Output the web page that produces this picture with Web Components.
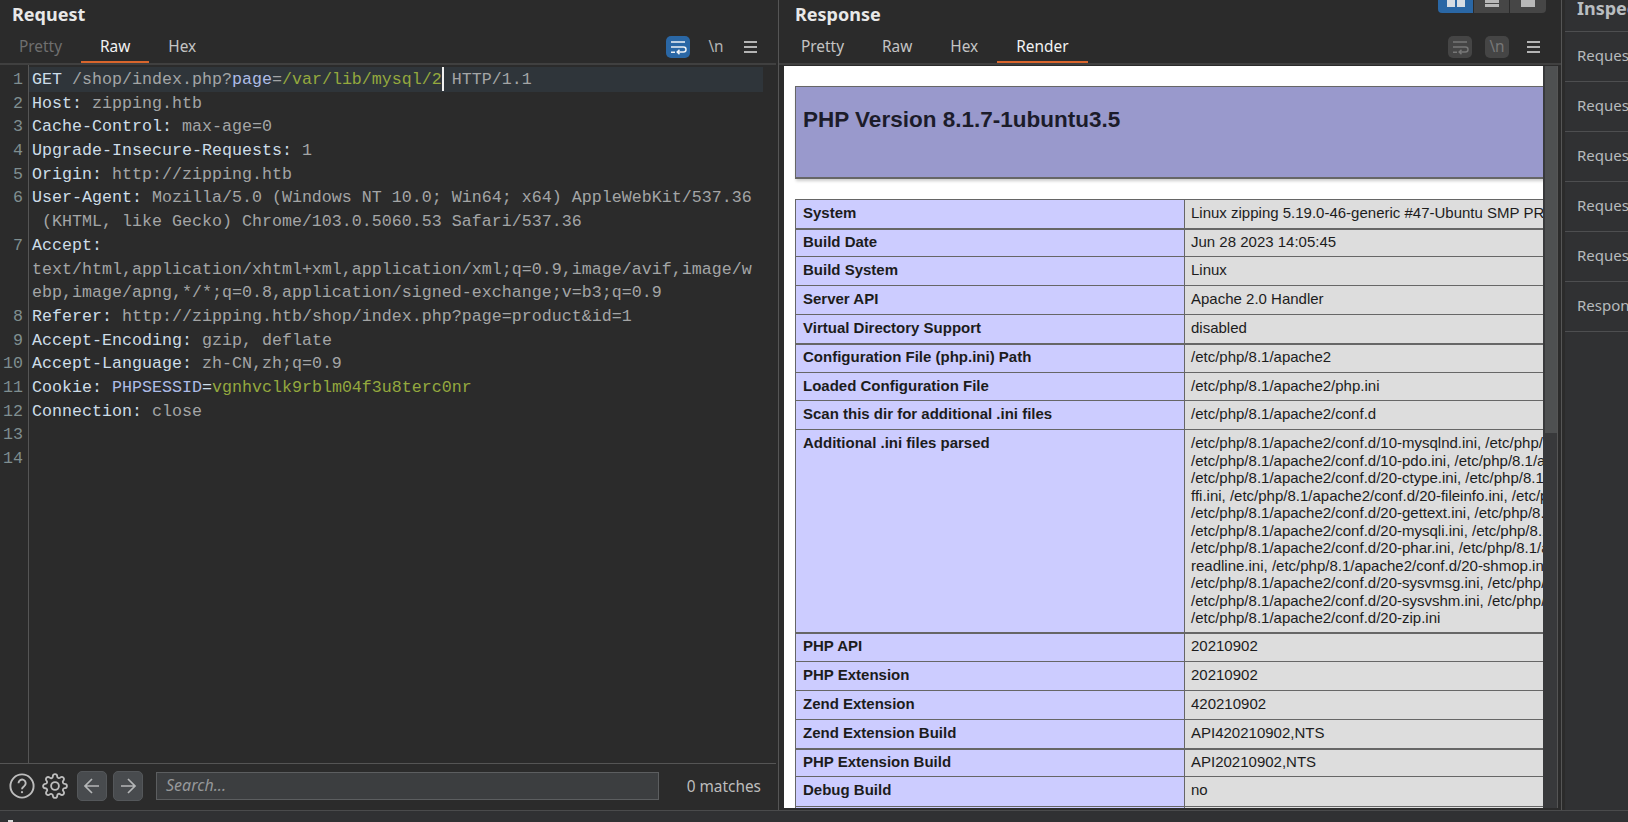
<!DOCTYPE html>
<html>
<head>
<meta charset="utf-8">
<title>Repeater</title>
<style>
  html, body { margin: 0; padding: 0; background: #2b2b2b; overflow: hidden; }
  body { font-family: "Noto Sans", "Open Sans", sans-serif; }
</style>
</head>
<body>
<burp-app>
  <message-pane heading="Request" style="--head-left:12px;--tools-right:19px;--strip-left:0px">
    <tab-strip tabs="Pretty,Raw,Hex" active="Raw" dim="Pretty"></tab-strip>
    <code-view></code-view>
    <search-bar></search-bar>
  </message-pane>
  <message-pane slot="response" heading="Response" style="--head-left:16px;--tools-right:21px;--strip-left:3px">
    <layout-toggle slot="head"></layout-toggle>
    <tab-strip tabs="Pretty,Raw,Hex,Render" active="Render" disabled></tab-strip>
    <render-view>
      <php-info></php-info>
    </render-view>
  </message-pane>
  <inspector-rail slot="rail"></inspector-rail>
</burp-app>

<script>
const WRAP_ICON = `<svg width="24" height="22" viewBox="0 0 24 22" fill="none" stroke="currentColor" stroke-width="1.5">
  <path d="M5 6h14M5 11h12.5a2.5 2.5 0 0 1 0 5H11.5M13.5 13.8l-2.3 2.2 2.3 2.2M5 16.2h4"/></svg>`;
const MENU_ICON = `<svg width="13" height="12" viewBox="0 0 13 12" fill="currentColor">
  <rect y="0" width="13" height="2"/><rect y="5" width="13" height="2"/><rect y="10" width="13" height="2"/></svg>`;
const GEAR_PATH = 'M19.4 15a1.65 1.65 0 0 0 .33 1.82l.06.06a2 2 0 0 1 0 2.83 2 2 0 0 1-2.83 0l-.06-.06a1.65 1.65 0 0 0-1.82-.33 1.65 1.65 0 0 0-1 1.51V21a2 2 0 0 1-2 2 2 2 0 0 1-2-2v-.09A1.65 1.65 0 0 0 9 19.4a1.65 1.65 0 0 0-1.82.33l-.06.06a2 2 0 0 1-2.83 0 2 2 0 0 1 0-2.83l.06-.06a1.65 1.65 0 0 0 .33-1.82 1.65 1.65 0 0 0-1.51-1H3a2 2 0 0 1-2-2 2 2 0 0 1 2-2h.09A1.65 1.65 0 0 0 4.6 9a1.65 1.65 0 0 0-.33-1.82l-.06-.06a2 2 0 0 1 0-2.83 2 2 0 0 1 2.83 0l.06.06a1.65 1.65 0 0 0 1.82.33H9a1.65 1.65 0 0 0 1-1.51V3a2 2 0 0 1 2-2 2 2 0 0 1 2 2v.09a1.65 1.65 0 0 0 1 1.51 1.65 1.65 0 0 0 1.82-.33l.06-.06a2 2 0 0 1 2.83 0 2 2 0 0 1 0 2.83l-.06.06a1.65 1.65 0 0 0-.33 1.82V9a1.65 1.65 0 0 0 1.51 1H21a2 2 0 0 1 2 2 2 2 0 0 1-2 2h-.09a1.65 1.65 0 0 0-1.51 1z';

class BurpApp extends HTMLElement {
  constructor() {
    super();
    this.attachShadow({mode: 'open'});
    this.shadowRoot.innerHTML = `
      <style>
        :host {
          display: grid;
          grid-template-columns: 776px 2px 1px 782px 1px 1fr;
          grid-template-rows: 810px 12px;
          width: 1628px;
          height: 822px;
          background: #2b2b2b;
        }
        .line { background: #555; }
        .status {
          grid-column: 1 / -1;
          border-top: 1px solid #4a4b4c;
          background: #303133;
          padding-left: 8px;
          display: flex;
          align-items: flex-end;
        }
        .status i { display: block; width: 5px; height: 2px; background: #d8d8d8; }
      </style>
      <slot></slot>
      <div></div>
      <div class="line"></div>
      <slot name="response"></slot>
      <div class="line"></div>
      <slot name="rail"></slot>
      <div class="status"><i></i></div>
    `;
  }
}

class MessagePane extends HTMLElement {
  constructor() {
    super();
    this.attachShadow({mode: 'open'});
  }

  connectedCallback() {
    this.shadowRoot.innerHTML = `
      <style>
        :host {
          display: flex;
          flex-direction: column;
          min-width: 0;
          height: 810px;
          overflow: hidden;
        }
        .head {
          height: 30px;
          flex: none;
          display: flex;
          justify-content: space-between;
          align-items: flex-start;
          padding: 0 15px 0 var(--head-left);
        }
        h2 {
          margin: 0;
          font: 700 18px/29px "Noto Sans", sans-serif;
          color: #e8e8e8;
        }
      </style>
      <div class="head"><h2>${this.getAttribute('heading')}</h2><slot name="head"></slot></div>
      <slot></slot>
    `;
  }
}

class LayoutToggle extends HTMLElement {
  constructor() {
    super();
    this.attachShadow({mode: 'open'});
    this.shadowRoot.innerHTML = `
      <style>
        :host { display: flex; gap: 1px; height: 13px; }
        span {
          width: 35px;
          display: flex;
          gap: 2px;
          justify-content: center;
          background: #464646;
        }
        span:first-of-type { background: #2a67a5; border-bottom-left-radius: 4px; }
        span:last-of-type { width: 36px; border-bottom-right-radius: 4px; }
        b { display: block; height: 7px; background: #b8b8b8; }
        span:first-of-type b { width: 8px; background: #d7dde3; }
        .stack { flex-direction: column; align-items: center; justify-content: flex-start; gap: 1px; }
        .stack b { width: 14px; height: 3px; }
        span:last-of-type b { width: 14px; }
      </style>
      <span><b></b><b></b></span>
      <span class="stack"><b></b><b></b></span>
      <span><b></b></span>
    `;
  }
}

class TabStrip extends HTMLElement {
  constructor() {
    super();
    this.attachShadow({mode: 'open'});
  }

  connectedCallback() {
    const active = this.getAttribute('active');
    const dim = this.getAttribute('dim');
    const off = this.hasAttribute('disabled');
    this.shadowRoot.innerHTML = `
      <style>
        :host {
          display: flex;
          flex: none;
          height: 35px;
          box-sizing: border-box;
          border-bottom: 2px solid #404040;
          padding: 0 var(--tools-right) 0 var(--strip-left);
          font: 15.4px/33px "Noto Sans", sans-serif;
          color: #c4c4c4;
          align-items: stretch;
        }
        .tab { padding: 0 19px; height: 31px; border-bottom: 2px solid transparent; }
        .tab.on { color: #f2f2f2; border-bottom-color: #d9652c; }
        .tab.dim { color: #6f6f6f; }
        .tools { margin-left: auto; display: flex; align-items: center; color: #b4b4b4; }
        .btn {
          width: 24px;
          height: 22px;
          border-radius: 5px;
          display: flex;
          align-items: center;
          justify-content: center;
          line-height: 22px;
        }
        .wrap { background: #2a67a5; color: #eef2f6; margin-right: 14px; }
        .nl { margin-right: 16px; }
        .off .wrap { background: #454545; color: #777; margin-right: 13px; }
        .off .nl { background: #454545; color: #777; margin-right: 18px; }
      </style>
      ${
        this.getAttribute('tabs')
            .split(',')
            .map(t => `<div class="tab ${t === active ? 'on' : ''} ${t === dim ? 'dim' : ''}">${t}</div>`)
            .join('')}
      <div class="tools ${off ? 'off' : ''}">
        <div class="btn wrap">${WRAP_ICON}</div>
        <div class="btn nl">\\n</div>
        ${MENU_ICON}
      </div>
    `;
  }
}

// one entry per drawn row: [line number or '', parts]
// k key, v plain value, n param name, g green value, c caret
const REQUEST = [
  [1, [['k', 'GET'], ['v', ' /shop/index.php?'], ['n', 'page'], ['v', '='], ['g', '/var/lib/mysql/2'], ['c', ''], ['v', ' HTTP/1.1']]],
  [2, [['k', 'Host:'], ['v', ' zipping.htb']]],
  [3, [['k', 'Cache-Control:'], ['v', ' max-age=0']]],
  [4, [['k', 'Upgrade-Insecure-Requests:'], ['v', ' 1']]],
  [5, [['k', 'Origin:'], ['v', ' http://zipping.htb']]],
  [6, [['k', 'User-Agent:'], ['v', ' Mozilla/5.0 (Windows NT 10.0; Win64; x64) AppleWebKit/537.36']]],
  ['', [['v', ' (KHTML, like Gecko) Chrome/103.0.5060.53 Safari/537.36']]],
  [7, [['k', 'Accept:']]],
  ['', [['v', 'text/html,application/xhtml+xml,application/xml;q=0.9,image/avif,image/w']]],
  ['', [['v', 'ebp,image/apng,*/*;q=0.8,application/signed-exchange;v=b3;q=0.9']]],
  [8, [['k', 'Referer:'], ['v', ' http://zipping.htb/shop/index.php?page=product&amp;id=1']]],
  [9, [['k', 'Accept-Encoding:'], ['v', ' gzip, deflate']]],
  [10, [['k', 'Accept-Language:'], ['v', ' zh-CN,zh;q=0.9']]],
  [11, [['k', 'Cookie:'], ['v', ' '], ['n', 'PHPSESSID'], ['k', '='], ['g', 'vgnhvclk9rblm04f3u8terc0nr']]],
  [12, [['k', 'Connection:'], ['v', ' close']]],
  [13, []],
  [14, []],
];

class CodeView extends HTMLElement {
  constructor() {
    super();
    this.attachShadow({mode: 'open'});
  }

  connectedCallback() {
    this.shadowRoot.innerHTML = `
      <style>
        :host {
          display: grid;
          grid-template-columns: 29px 1fr;
          flex: 1;
          min-height: 0;
          font: 16.67px/23.7px "Liberation Mono", monospace;
          border-bottom: 1px solid #555;
        }
        .gutter { border-right: 1px solid #555; padding-top: 3px; color: #7f8e90; text-align: right; }
        .gutter div { padding-right: 5px; height: 23.7px; }
        .text { padding: 3px 13px 0 0; }
        .l { white-space: pre; padding-left: 3px; height: 23.7px; }
        .l.cur { background: #2f353a; margin-top: -1px; padding-top: 1px; }
        .k { color: #cddde8; }
        .v { color: #a3a5a6; }
        .n { color: #aebce6; }
        .g { color: #94a83e; }
        .c { display: inline-block; width: 2px; height: 24px; margin: -1px -2px 0 0; background: #f0f0f0; vertical-align: top; }
      </style>
      <div class="gutter">
        ${REQUEST.map(([num]) => `<div>${num}</div>`).join('')}
      </div>
      <div class="text">
        ${
        REQUEST
            .map(
                ([num, parts], i) => `<div class="l ${i === 0 ? 'cur' : ''}">${
                    parts.map(([cls, txt]) => `<span class="${cls}">${txt}</span>`).join('')}</div>`)
            .join('')}
      </div>
    `;
  }
}

class SearchBar extends HTMLElement {
  constructor() {
    super();
    this.attachShadow({mode: 'open'});
    this.shadowRoot.innerHTML = `
      <style>
        :host {
          display: flex;
          flex: none;
          align-items: center;
          height: 46px;
          box-sizing: border-box;
          padding: 0 15px 2px 9px;
          color: #bdbdbd;
          font: 15.4px "Noto Sans", sans-serif;
        }
        svg { display: block; flex: none; }
        .gear { margin: 0 9px 0 7px; }
        .arrow {
          width: 30px;
          height: 30px;
          box-sizing: border-box;
          border: 1px solid #54575a;
          border-radius: 5px;
          background: #484b4e;
          display: flex;
          align-items: center;
          justify-content: center;
          margin-right: 6px;
          color: #b5b7b8;
        }
        .input {
          flex: 1;
          height: 28px;
          box-sizing: border-box;
          border: 1px solid #5c5e60;
          background: #3c3e40;
          margin: 0 28px 0 7px;
          padding-left: 9px;
          font: italic 16px/25px "Noto Sans", sans-serif;
          color: #96989a;
        }
      </style>
      <svg width="26" height="26" viewBox="0 0 26 26" fill="none" stroke="currentColor" stroke-width="1.9">
        <circle cx="13" cy="13" r="11.6"/>
        <path d="M9.5 10.2a3.6 3.6 0 1 1 5.6 3c-1.3.9-2.1 1.5-2.1 3"/>
        <circle cx="13" cy="19.2" r="1.1" fill="currentColor" stroke="none"/>
      </svg>
      <svg class="gear" width="26" height="26" viewBox="0 0 24 24" fill="none" stroke="currentColor" stroke-width="1.7">
        <path d="${GEAR_PATH}"/><circle cx="12" cy="12" r="3.6"/>
      </svg>
      <div class="arrow"><svg width="18" height="18" viewBox="0 0 18 18" fill="none" stroke="currentColor" stroke-width="1.7"><path d="M16 9H2M9 2L2 9l7 7"/></svg></div>
      <div class="arrow"><svg width="18" height="18" viewBox="0 0 18 18" fill="none" stroke="currentColor" stroke-width="1.7"><path d="M2 9h14M9 2l7 7-7 7"/></svg></div>
      <div class="input">Search...</div>
      <div>0 matches</div>
    `;
  }
}

class RenderView extends HTMLElement {
  constructor() {
    super();
    this.attachShadow({mode: 'open'});
    this.shadowRoot.innerHTML = `
      <style>
        :host {
          display: flex;
          flex: 1;
          min-height: 0;
          padding: 1px 3px 2px 5px;
        }
        .page { flex: 1; min-width: 0; overflow: hidden; background: #fff; }
        .track {
          flex: none;
          width: 14px;
          padding-left: 2px;
          box-sizing: border-box;
          background: #38393b;
        }
        .thumb { height: 367px; background: #4e5051; }
        .edge { width: 1px; background: #555; }
      </style>
      <div class="page"><slot></slot></div>
      <div class="track"><div class="thumb"></div></div>
      <div class="edge"></div>
    `;
  }
}

class PhpRow extends HTMLElement {
  constructor() {
    super();
    this.attachShadow({mode: 'open'});
  }

  connectedCallback() {
    const thick = this.hasAttribute('thick');
    this.shadowRoot.innerHTML = `
      <style>
        :host {
          display: grid;
          grid-template-columns: 389px 1fr;
          height: ${this.getAttribute('h')}px;
          box-sizing: border-box;
          border-top: ${thick ? 2 : 1}px solid #666;
          color: #1c1c1c;
          line-height: 17.55px;
        }
        div { box-sizing: border-box; white-space: pre; overflow: hidden; }
        .e {
          padding: ${thick ? 3 : 4}px 0 0 7px;
          background: #ccf;
          border-right: 1px solid #666;
          font-weight: 700;
          font-size: 15px;
        }
        .v { padding: ${thick ? 3 : 4}px 0 0 6px; background: #ddd; font-size: 15px; }
      </style>
      <div class="e">${this.getAttribute('label')}</div>
      <div class="v"><slot></slot></div>
    `;
  }
}
customElements.define('php-row', PhpRow);

const PHP_ROWS = [
  [29, 'System', 'Linux zipping 5.19.0-46-generic #47-Ubuntu SMP PREEMPT'],
  [28, 'Build Date', 'Jun 28 2023 14:05:45', 1],
  [29, 'Build System', 'Linux'],
  [29, 'Server API', 'Apache 2.0 Handler'],
  [29, 'Virtual Directory Support', 'disabled'],
  [29, 'Configuration File (php.ini) Path', '/etc/php/8.1/apache2', 1],
  [28, 'Loaded Configuration File', '/etc/php/8.1/apache2/php.ini'],
  [29, 'Scan this dir for additional .ini files', '/etc/php/8.1/apache2/conf.d'],
  [203, 'Additional .ini files parsed', `/etc/php/8.1/apache2/conf.d/10-mysqlnd.ini, /etc/php/8.1
/etc/php/8.1/apache2/conf.d/10-pdo.ini, /etc/php/8.1/apache2
/etc/php/8.1/apache2/conf.d/20-ctype.ini, /etc/php/8.1/apache2
ffi.ini, /etc/php/8.1/apache2/conf.d/20-fileinfo.ini, /etc/php/8.1
/etc/php/8.1/apache2/conf.d/20-gettext.ini, /etc/php/8.1/apache2
/etc/php/8.1/apache2/conf.d/20-mysqli.ini, /etc/php/8.1/apache2
/etc/php/8.1/apache2/conf.d/20-phar.ini, /etc/php/8.1/apache2
readline.ini, /etc/php/8.1/apache2/conf.d/20-shmop.ini
/etc/php/8.1/apache2/conf.d/20-sysvmsg.ini, /etc/php/8.1/apache2
/etc/php/8.1/apache2/conf.d/20-sysvshm.ini, /etc/php/8.1/apache2
/etc/php/8.1/apache2/conf.d/20-zip.ini`],
  [29, 'PHP API', '20210902', 1],
  [29, 'PHP Extension', '20210902'],
  [29, 'Zend Extension', '420210902'],
  [29, 'Zend Extension Build', 'API420210902,NTS'],
  [28, 'PHP Extension Build', 'API20210902,NTS', 1],
  [30, 'Debug Build', 'no'],
  [29, '', ''],
];

class PhpInfo extends HTMLElement {
  constructor() {
    super();
    this.attachShadow({mode: 'open'});
  }

  connectedCallback() {
    this.shadowRoot.innerHTML = `
      <style>
        :host {
          display: block;
          width: 1000px;
          padding: 20px 0 0 11px;
          font-family: "Liberation Sans", Arial, sans-serif;
        }
        .banner {
          height: 93px;
          box-sizing: border-box;
          background: #99c;
          border: 1px solid #666;
          border-bottom-width: 2px;
          box-shadow: 1px 2px 3px #ccc;
          padding: 20px 0 0 7px;
          margin-bottom: 20px;
        }
        h1 { margin: 0; font: 700 22.5px/26px "Liberation Sans", Arial, sans-serif; color: #1c1c2a; }
        .table { border-left: 1px solid #666; }
      </style>
      <div class="banner"><h1>PHP Version 8.1.7-1ubuntu3.5</h1></div>
      <div class="table">
        ${
        PHP_ROWS
            .map(
                ([h, label, value, thick]) =>
                    `<php-row h="${h}" label="${label}" ${thick ? 'thick' : ''}>${value}</php-row>`)
            .join('')}
      </div>
    `;
  }
}

class InspectorRail extends HTMLElement {
  constructor() {
    super();
    this.attachShadow({mode: 'open'});
    const labels = ['Request attributes', 'Request query parameters', 'Request body parameters',
      'Request cookies', 'Request headers', 'Response headers'];
    this.shadowRoot.innerHTML = `
      <style>
        :host {
          display: block;
          overflow: hidden;
          height: 810px;
          padding-left: 3px;
          color: #b6babd;
          font: 15px/47px "Noto Sans", sans-serif;
        }
        .in { background: #303133; height: 100%; padding-left: 12px; }
        .row, .title { white-space: nowrap; border-bottom: 1px solid #4d4e50; margin-left: -12px; padding-left: 12px; }
        .title { font-weight: 700; font-size: 18px; line-height: 16px; height: 31px; color: #b9bdc0; }
        .row { height: 49px; }
      </style>
      <div class="in">
        <div class="title">Inspector</div>
        ${labels.map(l => `<div class="row">${l}</div>`).join('')}
      </div>
    `;
  }
}

customElements.define('burp-app', BurpApp);
customElements.define('message-pane', MessagePane);
customElements.define('layout-toggle', LayoutToggle);
customElements.define('tab-strip', TabStrip);
customElements.define('code-view', CodeView);
customElements.define('search-bar', SearchBar);
customElements.define('render-view', RenderView);
customElements.define('php-info', PhpInfo);
customElements.define('inspector-rail', InspectorRail);
</script>
</body>
</html>
